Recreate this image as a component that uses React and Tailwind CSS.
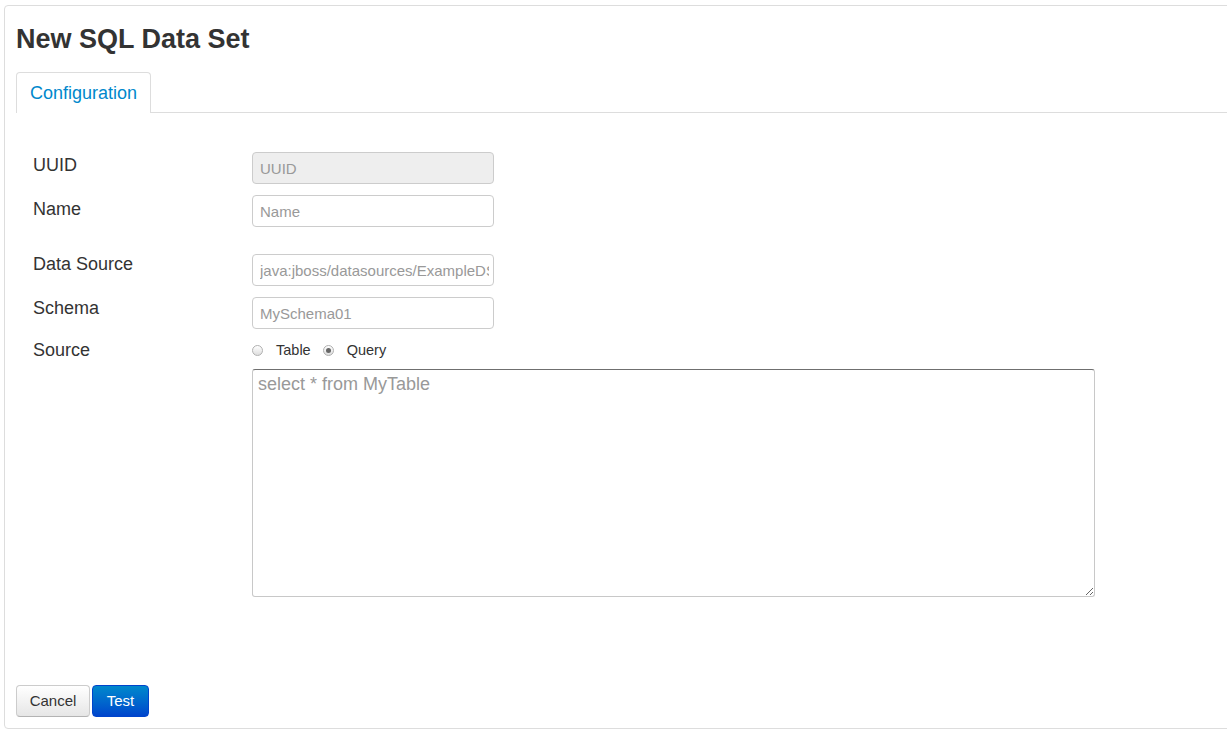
import React from 'react';

// New SQL Data Set editor — single tab ("Configuration") with the data set form.

const font = { fontFamily: '"Liberation Sans", Arial, sans-serif' };

function Radio({ checked, label }) {
  return (
    <label className="flex items-center gap-[13px] mr-[12px] text-[14.5px] text-[#333] leading-[24px]">
      <span className="w-[11px] h-[11px] rounded-full border border-[#b0b0b0] bg-gradient-to-b from-white to-[#dedede] flex items-center justify-center">
        {checked && <span className="w-[5px] h-[5px] rounded-full bg-[#666]" />}
      </span>
      {label}
    </label>
  );
}

function TextInput({ placeholder, disabled }) {
  return (
    <input
      type="text"
      disabled={disabled}
      placeholder={placeholder}
      className={
        'w-[242px] h-[32px] pl-[7px] pr-[4px] border border-[#ccc] rounded-[4px] text-[15px] text-[#555] placeholder:text-[#999] outline-none ' +
        (disabled ? 'bg-[#eee]' : 'bg-white')
      }
      style={font}
    />
  );
}

export default function App() {
  return (
    <div className="w-full h-[736px] overflow-hidden bg-white" style={font}>
      <div className="ml-[4px] mt-[5px] w-[1240px] h-[724px] border border-[#ddd] rounded-[4px] px-[11px] flex flex-col">
        <h3 className="mt-[17px] text-[27px] leading-[32px] font-bold text-[#333]">New SQL Data Set</h3>

        <div className="mt-[17px] flex border-b border-[#ddd]">
          <div className="-mb-px px-[13px] py-[10px] leading-[20px] text-[18px] text-[#0088cc] bg-white border-t border-l border-r border-[#ddd] rounded-t-[4px]">
            Configuration
          </div>
        </div>

        <div className="pl-[17px] flex flex-col">
          <div className="mt-[39px] flex items-start">
            <div className="w-[219px] mt-[1px] text-[18px] leading-[24px] text-[#333]">UUID</div>
            <TextInput placeholder="UUID" disabled />
          </div>

          <div className="mt-[11px] flex items-start">
            <div className="w-[219px] mt-[2px] text-[18px] leading-[24px] text-[#333]">Name</div>
            <TextInput placeholder="Name" />
          </div>

          <div className="mt-[25px] flex items-start">
            <div className="w-[219px] text-[18px] leading-[24px] text-[#333]">Data Source</div>
            <div className="mt-[2px]">
              <TextInput placeholder="java:jboss/datasources/ExampleDS" />
            </div>
          </div>

          <div className="mt-[10px] flex items-start">
            <div className="w-[219px] text-[18px] leading-[24px] text-[#333]">Schema</div>
            <div className="mt-[1px]">
              <TextInput placeholder="MySchema01" />
            </div>
          </div>

          <div className="mt-[9px] flex items-start">
            <div className="w-[219px] text-[18px] leading-[24px] text-[#333]">Source</div>
            <div className="flex flex-col">
              <div className="flex items-center h-[24px]">
                <Radio label="Table" />
                <Radio label="Query" checked />
              </div>
              <textarea
                placeholder="select * from MyTable"
                className="mt-[7px] w-[843px] h-[228px] pt-[4px] px-[5px] border border-[#c8c8c8] border-t-[#6f6f6f] rounded-[3px] text-[18px] leading-[20px] text-[#555] placeholder:text-[#999] outline-none"
                style={font}
              />
            </div>
          </div>
        </div>

        <div className="mt-auto pb-[11px] flex gap-[2px]">
          <button className="w-[74px] h-[32px] text-[15px] text-[#333] rounded-[4px] border border-[#ccc] border-b-[#b3b3b3] bg-gradient-to-b from-white to-[#e6e6e6]">
            Cancel
          </button>
          <button className="w-[57px] h-[32px] text-[15px] text-white rounded-[4px] border border-[#0044cc] bg-gradient-to-b from-[#0088cc] to-[#0044cc]">
            Test
          </button>
        </div>
      </div>
    </div>
  );
}
